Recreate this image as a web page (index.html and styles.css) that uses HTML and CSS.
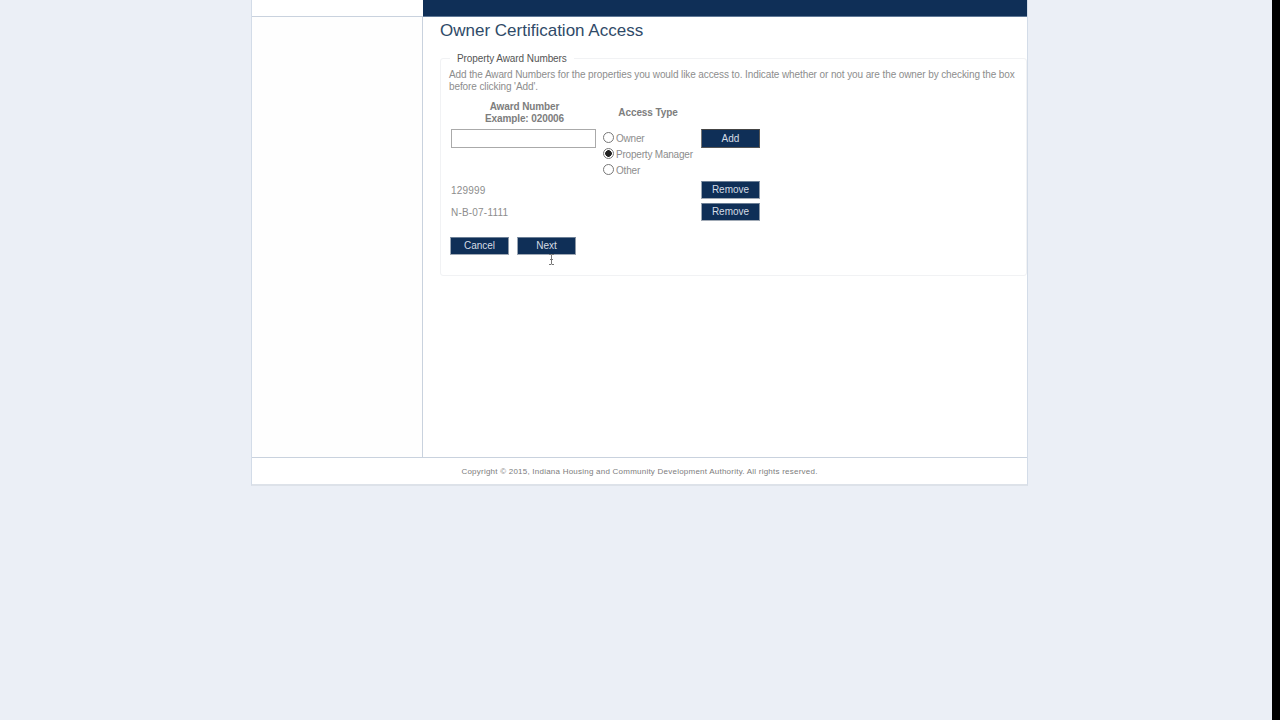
FILE: index.html
```html
<!DOCTYPE html>
<html lang="en">

<head>
    <meta charset="utf-8">
    <title>Owner Certification Access</title>
    <link rel="stylesheet" href="styles.css">
</head>

<body>
    <div class="screen">
        <div class="wrapper">
            <div class="top">
                <div class="side_top"></div>
                <div class="nav"></div>
            </div>
            <div class="main">
                <div class="side"></div>
                <div class="content">
                    <h1>Owner Certification Access</h1>
                    <fieldset class="award_box">
                        <legend>Property Award Numbers</legend>
                        <p class="info">Add the Award Numbers for the properties you would like access to. Indicate whether or not you are the owner by checking the box before clicking 'Add'.</p>

                        <div class="award_form">
                            <div class="col_number">
                                <div class="col_head">Award Number<br>Example: 020006</div>
                                <input type="text" class="award_input">
                            </div>
                            <div class="col_type">
                                <div class="type_head">Access Type</div>
                                <label class="radio_row"><input type="radio" name="access">Owner</label>
                                <label class="radio_row"><input type="radio" name="access" checked>Property Manager</label>
                                <label class="radio_row"><input type="radio" name="access">Other</label>
                            </div>
                            <button class="btn btn_add">Add</button>
                        </div>

                        <div class="award_row row_first">
                            <span>129999</span>
                            <button class="btn">Remove</button>
                        </div>
                        <div class="award_row">
                            <span>N-B-07-1111</span>
                            <button class="btn">Remove</button>
                        </div>

                        <div class="actions">
                            <button class="btn">Cancel</button>
                            <button class="btn">Next</button>
                        </div>
                    </fieldset>
                </div>
            </div>
            <div class="footer">Copyright &copy; 2015, Indiana Housing and Community Development Authority. All rights reserved.</div>
        </div>
        <svg class="cursor" width="7" height="11" viewBox="0 0 7 11">
            <path d="M1 .5h2l.5.5.5-.5h2M3.5 1v9M1 10.5h2l.5-.5.5.5h2M2 5.5h3" fill="none" stroke="#777" stroke-width="1"/>
        </svg>
    </div>
    <div class="black_bar"></div>
</body>

</html>
```

FILE: styles.css
```css
* {
    padding: 0;
    margin: 0;
    box-sizing: border-box;
}

html,
body {
    width: 100%;
    height: 100%;
    overflow: hidden;
}

body {
    display: flex;
    background-color: #000;
    font-family: "Liberation Sans", Arial, sans-serif;
    font-size: 10px;
    color: #777;
}

.screen {
    width: 1272px;
    height: 720px;
    background-color: #ebeff6;
    padding-left: 251px;
    position: relative;
}

.black_bar {
    width: 8px;
}

.wrapper {
    width: 777px;
    height: 486px;
    background: #fff;
    border: 1px solid #d3dce8;
    border-top: none;
    border-bottom: 2px solid #dde2e9;
    display: flex;
    flex-direction: column;
}

.top {
    display: flex;
    height: 17px;
}

.side_top {
    width: 171px;
    border-bottom: 1px solid #c9d2de;
}

.nav {
    flex: 1;
    background-color: #0f2f57;
    border-bottom: 1px solid #5f7896;
}

.main {
    display: flex;
    height: 441px;
}

.side {
    width: 171px;
    border-right: 1px solid #c9d2de;
    background-color: #fefefe;
}

.content {
    flex: 1;
    padding-left: 17px;
}

h1 {
    font-size: 17px;
    font-weight: normal;
    color: #2f4a68;
    height: 37px;
    line-height: 28px;
}

.award_box {
    margin-top: -1px;
    height: 223px;
    border: 1px solid #f1f2f4;
    border-radius: 3px;
    padding: 0 8px;
}

.award_box legend {
    margin-left: 1px;
    padding: 0 7px;
    font-size: 10px;
    line-height: 12px;
    letter-spacing: -0.08px;
    color: #555;
}

.info {
    line-height: 12px;
    letter-spacing: -0.1px;
    color: #8d8d8d;
    margin-top: 4px;
}

.award_form {
    display: flex;
    margin-top: 8px;
    height: 80px;
}

.col_number {
    width: 147px;
    margin-left: 2px;
}

.col_head {
    font-weight: bold;
    text-align: center;
    line-height: 12px;
    letter-spacing: -0.1px;
    color: #7d7d7d;
}

.award_input {
    display: block;
    width: 145px;
    height: 19px;
    margin-top: 4px;
    border: 1px solid #aaa;
    background: #fff;
}

.col_type {
    width: 98px;
    margin-left: 5px;
}

.type_head {
    font-weight: bold;
    text-align: center;
    width: 90px;
    line-height: 12px;
    margin-top: 6px;
    letter-spacing: -0.1px;
    margin-bottom: 12px;
    color: #7d7d7d;
}

.radio_row {
    display: flex;
    align-items: center;
    height: 16px;
    letter-spacing: -0.2px;
    color: #8d8d8d;
}

.radio_row input {
    appearance: none;
    width: 11px;
    height: 11px;
    margin: -3px 2px 0 0;
    border: 1px solid #777;
    border-radius: 50%;
    background: #fff;
}

.radio_row input:checked {
    background: radial-gradient(circle, #222 0, #222 3px, #fff 3.6px);
}

.btn {
    width: 59px;
    height: 18px;
    background-color: #0f2f57;
    border: 1px solid;
    border-color: #6c7f96 #8d98a6 #a0a9b5 #9aa6b4;
    color: #d5dce5;
    font-family: "Liberation Sans", Arial, sans-serif;
    font-size: 10px;
}

.btn_add {
    align-self: flex-start;
    margin-top: 28px;
    height: 19px;
    border-color: #444 #555 #555 #777;
}

.award_row {
    display: flex;
    align-items: center;
    justify-content: space-between;
    width: 309px;
    height: 18px;
    margin-left: 2px;
    margin-top: 4px;
    letter-spacing: 0.2px;
    color: #8d8d8d;
}

.award_row span {
    margin-top: 2px;
}

.row_first {
    margin-top: 0;
}

.actions {
    display: flex;
    gap: 8px;
    margin-top: 16px;
    margin-left: 1px;
}

.footer {
    flex: 1;
    border-top: 1px solid #c9d2de;
    text-align: center;
    font-size: 8px;
    padding-top: 2px;
    line-height: 24px;
    letter-spacing: 0.23px;
    color: #7d7d7d;
}

.cursor {
    position: absolute;
    left: 548px;
    top: 254px;
}
```
